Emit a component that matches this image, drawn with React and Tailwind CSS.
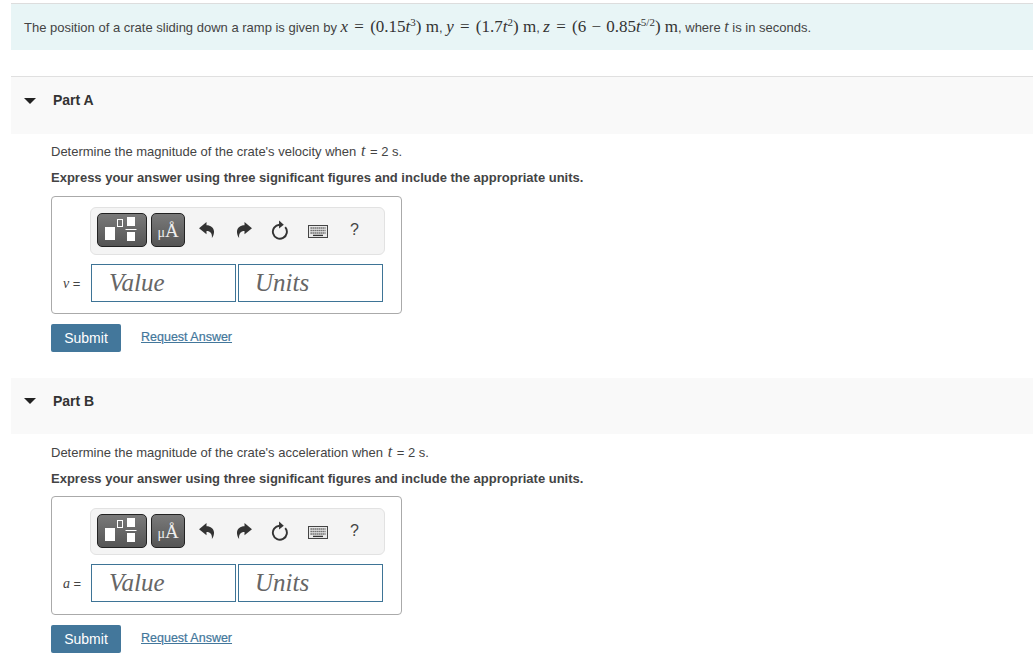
import React from "react";

const serif = "font-['Liberation_Serif',serif]";

function Undo({ flip }) {
  return (
    <svg width="15" height="16" viewBox="0 0 14 15" className={flip ? "-scale-x-100" : ""}>
      <path d="M0 5.8 L7 0 V3 C11.5 3 14.5 6 14 10 C13.8 12 13 14 12 15 C12.5 12 11.5 8.5 7 8.5 V11.5 Z" fill="#333" />
    </svg>
  );
}

function Reset() {
  return (
    <svg width="19" height="20" viewBox="0 0 19 20">
      <path d="M9 4.4 A7.4 7.4 0 1 0 15 7" fill="none" stroke="#333" strokeWidth="2" />
      <path d="M8.5 0 L13.5 4.4 L8.5 8.4 Z" fill="#333" />
    </svg>
  );
}

function Keyboard() {
  return (
    <svg width="20" height="13" viewBox="0 0 20 13">
      <rect x="0.5" y="0.5" width="19" height="12" fill="#e9e9e9" stroke="#444" />
      <path d="M2.5 3h15M2.5 5.5h15M2.5 8h15" stroke="#555" strokeWidth="1.3" strokeDasharray="1.3 0.7" />
      <path d="M5 10.4h10" stroke="#333" strokeWidth="1.3" />
    </svg>
  );
}

function Template() {
  return (
    <svg width="34" height="26" viewBox="0 0 34 26">
      <rect x="0" y="10" width="10" height="13" fill="#fff" />
      <rect x="12.5" y="2.5" width="5" height="7" fill="none" stroke="#fff" />
      <rect x="22" y="0" width="8" height="9" fill="#fff" />
      <rect x="20.5" y="12" width="11" height="1" fill="#fff" />
      <rect x="22" y="15" width="8" height="9" fill="#fff" />
    </svg>
  );
}

function Toolbar({ first }) {
  return (
    <div className={`ml-[38px] w-[295px] pl-[6px] pt-[5px] bg-[#f4f4f4] border border-[#e2e2e2] rounded-[6px] ${first ? "h-[48px]" : "h-[47px]"}`}>
      <div className="h-[34px] flex items-center">
        <div className="w-[50px] h-[34px] rounded-[5px] border border-[#222] bg-gradient-to-b from-[#7a7a7a] to-[#555] flex items-center justify-center">
          <Template />
        </div>
        <div className={`ml-[4px] w-[34px] h-[34px] rounded-[5px] border border-[#222] bg-gradient-to-b from-[#7a7a7a] to-[#555] flex items-baseline justify-center text-[#eee] pt-[6px] ${serif}`}>
          <span className="text-[14px]">μ</span>
          <span className="text-[19px] leading-[22px]">Å</span>
        </div>
        <div className="ml-[13px] w-[16px] flex justify-center"><Undo /></div>
        <div className="ml-[22px] w-[16px] flex justify-center"><Undo flip /></div>
        <div className="ml-[19px] w-[18px] flex justify-center"><Reset /></div>
        <div className="ml-[19px] mt-[3px] w-[20px] flex justify-center"><Keyboard /></div>
        <div className="ml-[22px] text-[16px] text-[#444]">?</div>
      </div>
    </div>
  );
}

function Part({ name, label, prompt, first }) {
  return (
    <section>
      <div className={`bg-[#f9f9f9] flex items-center pl-[13px] pb-[10px] ${first ? "border-t border-[#e0e0e0] h-[58px]" : "h-[56px]"}`}>
        <svg width="12" height="6" viewBox="0 0 12 6"><path d="M0 0H12L6 6Z" fill="#222" /></svg>
        <span className="ml-[17px] text-[14px] font-bold text-[#333]">{name}</span>
      </div>
      <div className="pl-[40px]">
        <p className={`h-[17px] leading-[15px] text-[13px] text-[#444] ${first ? "mt-[9px]" : "mt-[10px]"}`}>
          Determine the magnitude of the crate's {prompt} when <i className={`${serif} text-[16px] px-[1px] leading-none`}>t</i> = 2 s.
        </p>
        <p className="mt-[9px] h-[17px] leading-[17px] text-[13px] font-bold text-[#444]">
          Express your answer using three significant figures and include the appropriate units.
        </p>
        <div className={`w-[351px] border border-[#aaa] rounded-[4px] ${first ? "mt-[10px] h-[118px] pt-[10px]" : "mt-[9px] h-[119px] pt-[11px]"}`}>
          <Toolbar first={first} />
          <div className="mt-[9px] flex items-center">
            <span className="ml-[11px] w-[28px] text-[13px] text-[#444]"><i className={`${serif} text-[14px]`}>{label}</i> =</span>
            <div className={`w-[145px] h-[38px] border border-[#3e7496] pl-[17px] flex items-center text-[25px] text-[#666] ${serif}`}><i>Value</i></div>
            <div className={`ml-[2px] w-[145px] h-[38px] border border-[#3e7496] pl-[16px] flex items-center text-[25px] text-[#666] ${serif}`}><i>Units</i></div>
          </div>
        </div>
        <div className="mt-[10px] flex items-center h-[28px]">
          <div className="w-[70px] h-[28px] bg-[#43779b] rounded-[2px] text-white text-[14px] flex items-center justify-center">Submit</div>
          <span className="ml-[20px] -mt-[2px] text-[12.5px] [-webkit-text-stroke:0.2px] underline text-[#43779b]">Request Answer</span>
        </div>
      </div>
    </section>
  );
}

function Sup({ children }) {
  return <span className="text-[11px] leading-none relative -top-[6px]">{children}</span>;
}

function Eq() {
  return <span className="mx-[2px]">=</span>;
}

export default function App() {
  const math = `${serif} text-[17px] text-[#333]`;
  return (
    <div className="min-h-[670px] bg-white pt-[3px] pl-[11px] overflow-hidden font-['Liberation_Sans',sans-serif]">
      <div className="h-[47px] border-t border-[#ddd] bg-[#e8f5f6] pl-[13px] flex items-baseline pt-[10px] text-[13px] text-[#444] whitespace-nowrap">
        <span>The position of a crate sliding down a ramp is given by&nbsp;</span>
        <span className={math}>
          <i>x</i> <Eq /> (0.15<i>t</i><Sup>3</Sup>) m
        </span>
        <span>,&nbsp;</span>
        <span className={math}>
          <i>y</i> <Eq /> (1.7<i>t</i><Sup>2</Sup>) m
        </span>
        <span>,&nbsp;</span>
        <span className={math}>
          <i>z</i> <Eq /> (6 <span className="mx-[1px]">−</span> 0.85<i>t</i><Sup>5/2</Sup>) m
        </span>
        <span>, where&nbsp;</span>
        <i className={`${serif} text-[16px]`}>t</i>
        <span>&nbsp;is in seconds.</span>
      </div>
      <div className="mt-[26px]">
        <Part first name="Part A" label="v" prompt="velocity" />
        <div className="h-[26px]" />
        <Part name="Part B" label="a" prompt="acceleration" />
      </div>
    </div>
  );
}
